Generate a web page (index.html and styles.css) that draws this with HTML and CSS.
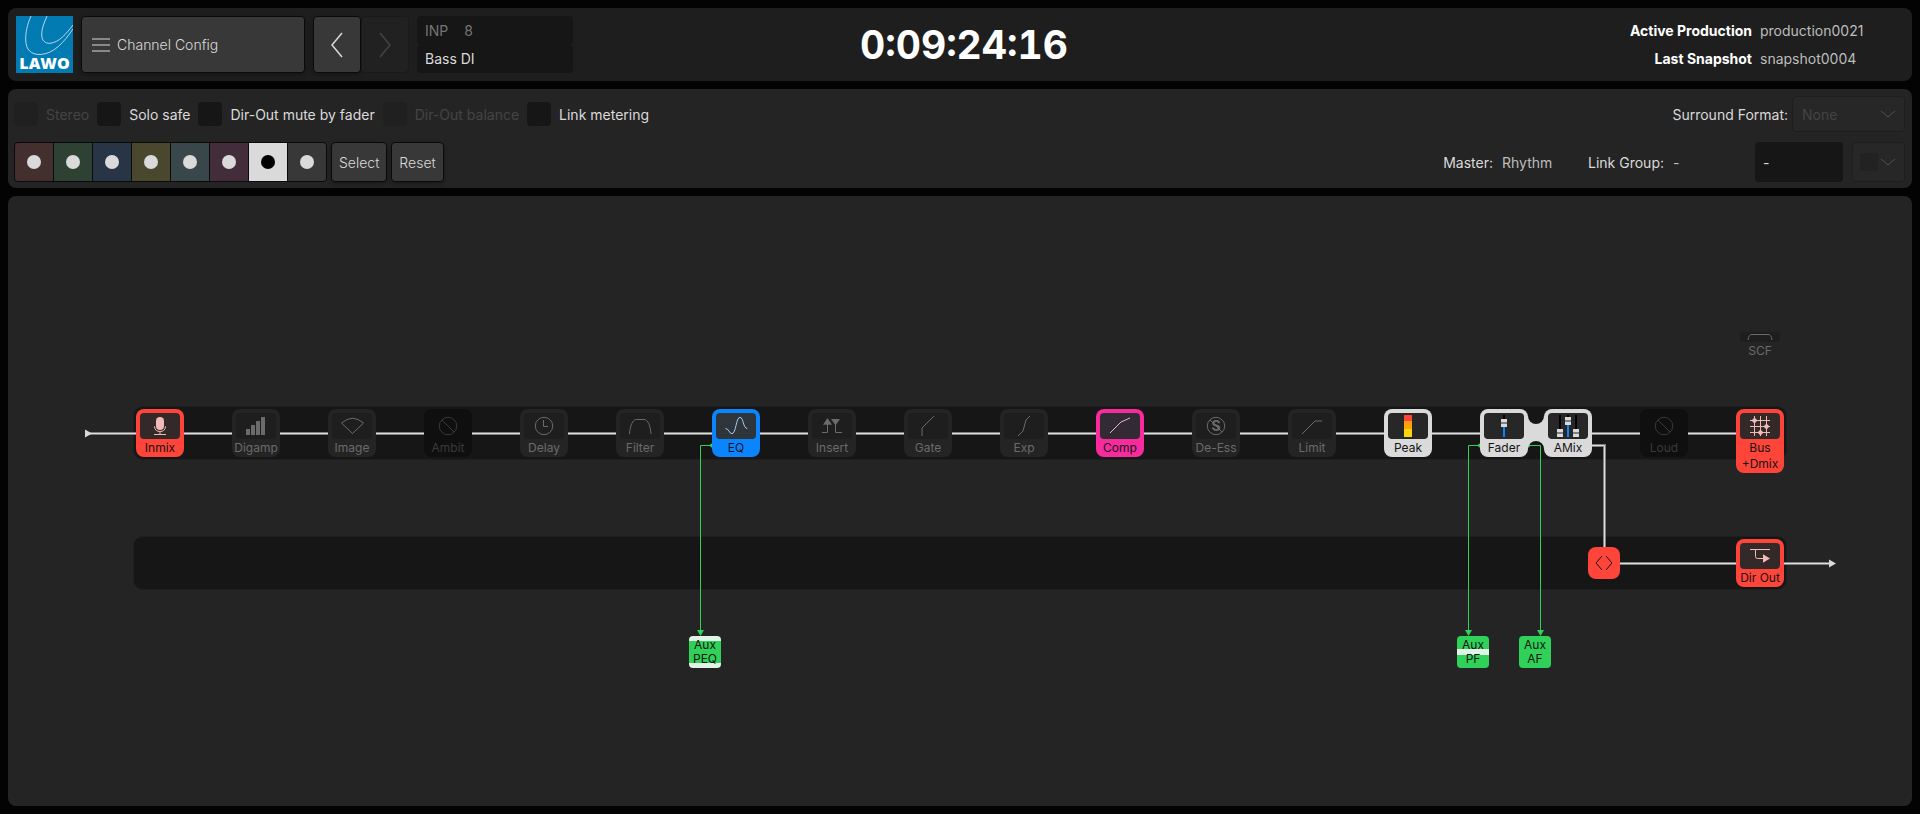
FILE: index.html
```
<!DOCTYPE html>
<html lang="en">
<head>
    <meta charset="UTF-8">
    <meta name="viewport" content="width=device-width, initial-scale=1.0">
    <title>Channel Config</title>
    <link rel="stylesheet" href="styles.css">
</head>
<body>
    <header class="panel header">
        <div class="header-left">
            <svg class="logo" viewBox="0 0 57 57" role="img" aria-label="Lawo">
                <rect width="57" height="57" fill="#027bb3"/>
                <g fill="none" stroke="#c5e2f0" stroke-width="0.9">
                    <path d="M15 0C11 9 9.5 17 9.7 24C10 34 15 38.5 24 38.5C38 38 48 26 57 13"/>
                    <path d="M31 0C28 7 25.5 13 25.7 19C26 25 29 27.5 34 27.3C43 26.5 50 18 57 9"/>
                </g>
                <text class="logo-text" x="28.5" y="53" text-anchor="middle">LAWO</text>
            </svg>
            <button class="btn menu-btn" type="button">
                <svg width="18" height="14" viewBox="0 0 18 14" stroke="currentColor"><path d="M0 1H18M0 7H18M0 13H18"/></svg>
                Channel Config
            </button>
            <div class="nav">
                <button class="btn nav-btn" type="button" aria-label="Previous channel">
                    <svg width="14" height="26" viewBox="0 0 14 26"><path d="M12 1L2 13L12 25"/></svg>
                </button>
                <button class="btn nav-btn" type="button" aria-label="Next channel" disabled>
                    <svg width="14" height="26" viewBox="0 0 14 26"><path d="M2 1L12 13L2 25"/></svg>
                </button>
            </div>
            <div class="channel">
                <div class="channel-id"><span>INP</span><span>8</span></div>
                <input class="channel-name" type="text" aria-label="Channel name" value="Bass DI">
            </div>
        </div>
        <div class="clock">0:09:24:16</div>
        <dl class="status">
            <dt>Active Production</dt>
            <dd>production0021</dd>
            <dt>Last Snapshot</dt>
            <dd>snapshot0004</dd>
        </dl>
    </header>

    <section class="panel toolbar">
        <div class="toolbar-row">
            <div class="checks">
                <label class="check"><input type="checkbox" disabled><span>Stereo</span></label>
                <label class="check"><input type="checkbox"><span>Solo safe</span></label>
                <label class="check"><input type="checkbox"><span>Dir-Out mute by fader</span></label>
                <label class="check"><input type="checkbox" disabled><span>Dir-Out balance</span></label>
                <label class="check"><input type="checkbox"><span>Link metering</span></label>
            </div>
            <div class="surround">
                <label for="surround-format">Surround Format:</label>
                <div class="dropdown">
                    <select id="surround-format" disabled><option>None</option></select>
                    <svg class="chevron" width="16" height="8" viewBox="0 0 16 8"><path d="M1 1L8 7L15 1"/></svg>
                </div>
            </div>
        </div>
        <div class="toolbar-row bottom">
            <div class="colours">
                <div class="swatches" role="radiogroup" aria-label="Channel colour">
                    <input class="red" type="radio" name="colour" aria-label="Red">
                    <input class="green" type="radio" name="colour" aria-label="Green">
                    <input class="blue" type="radio" name="colour" aria-label="Blue">
                    <input class="yellow" type="radio" name="colour" aria-label="Yellow">
                    <input class="cyan" type="radio" name="colour" aria-label="Cyan">
                    <input class="magenta" type="radio" name="colour" aria-label="Magenta">
                    <input class="white" type="radio" name="colour" aria-label="White" checked>
                    <input class="none" type="radio" name="colour" aria-label="None">
                </div>
                <button class="btn" type="button">Select</button>
                <button class="btn" type="button">Reset</button>
            </div>
            <div class="link">
                <span>Master:</span>
                <span class="link-value">Rhythm</span>
                <span>Link Group:</span>
                <span class="link-value">-</span>
                <input class="link-name" type="text" aria-label="Link group name" value="-">
                <div class="dropdown small">
                    <select aria-label="Link group colour" disabled><option></option></select>
                    <span class="dropdown-swatch"></span>
                    <svg class="chevron" width="16" height="8" viewBox="0 0 16 8"><path d="M1 1L8 7L15 1"/></svg>
                </div>
            </div>
        </div>
    </section>

    <main class="panel stage">
        <div class="canvas">
            <div class="track track-main"></div>
            <div class="track track-out"></div>

            <svg class="wires" viewBox="0 0 1750 352">
                <!-- signal path -->
                <g class="wire-outer">
                    <path d="M5 107.5H1655M1507 119.5H1519.5V223M1530 237.5H1745"/>
                </g>
                <g class="wire-inner">
                    <path d="M5 107.5H1655M1507 119.5H1519.5V223M1530 237.5H1745"/>
                </g>
                <g fill="#dadada">
                    <path d="M0 103.5L7 107.5L0 111.5ZM1744 233.5L1751 237.5L1744 241.5Z"/>
                </g>
                <!-- aux sends -->
                <g class="wire-aux">
                    <path d="M627 119.5H615.5V306M1395 119.5H1383.5V306M1443 119.5H1455.5V306"/>
                </g>
                <g fill="#30d158">
                    <path d="M612 304H619L615.5 310ZM1380 304H1387L1383.5 310ZM1452 304H1459L1455.5 310Z"/>
                    <circle cx="627" cy="119.5" r="2"/>
                    <circle cx="1395" cy="119.5" r="2"/>
                    <circle cx="1443" cy="119.5" r="2"/>
                </g>
            </svg>

            <button class="node scf" type="button">
                <svg class="icon" viewBox="0 0 40 10"><path d="M8 8C8.500 4.500 9.500 2.500 12 2.500H28C30.500 2.500 31.500 4.500 32 8"/></svg>
                <span>SCF</span>
            </button>

            <div class="chain">
                <button class="node red" type="button">
                    <svg class="icon" viewBox="0 0 40 26">
                        <rect class="fill" x="16" y="4" width="8" height="13" rx="4"/>
                        <path d="M14.500 13V13.500C14.500 17 17 18.500 20 18.500S25.500 17 25.500 13.500V13M20 18.500V21.500M14 21.500H26"/>
                    </svg>
                    <span>Inmix</span>
                </button>
                <button class="node" type="button">
                    <svg class="icon" viewBox="0 0 40 26"><path class="fill" d="M10 16h4v6h-4zM15 12h4v10h-4zM20 8h4v14h-4zM25 4h4v18h-4z"/></svg>
                    <span>Digamp</span>
                </button>
                <button class="node" type="button">
                    <svg class="icon" viewBox="0 0 40 26"><path d="M9.500 10Q20.500 0.500 31.500 10L20.500 20.500Z"/></svg>
                    <span>Image</span>
                </button>
                <button class="node empty" type="button">
                    <svg class="icon" viewBox="0 0 40 26"><circle cx="20" cy="13" r="8.700"/><path d="M14 7L26 19"/></svg>
                    <span>Ambit</span>
                </button>
                <button class="node" type="button">
                    <svg class="icon" viewBox="0 0 40 26"><circle cx="20" cy="13" r="8.700"/><path d="M19.500 7V13.500H24"/></svg>
                    <span>Delay</span>
                </button>
                <button class="node" type="button">
                    <svg class="icon" viewBox="0 0 40 26"><path d="M9.500 21C10 13 12.500 6.500 16.500 6.500H24C28 6.500 30.500 13 31 21"/></svg>
                    <span>Filter</span>
                </button>
                <button class="node blue" type="button">
                    <svg class="icon" viewBox="0 0 40 26"><path d="M9.500 15.500C13 15.500 13 20.700 16 20.700C20 20.700 20 4.300 24 4.300C27.500 4.300 27 15.500 31.300 15.500"/></svg>
                    <span>EQ</span>
                </button>
                <button class="node" type="button">
                    <svg class="icon" viewBox="0 0 40 26">
                        <path class="fill" d="M15.500 5L20 11.800H11ZM19 6H28L23.500 12.500Z"/>
                        <path d="M15.500 11V19.500H10M23.500 12V19.500H30"/>
                    </svg>
                    <span>Insert</span>
                </button>
                <button class="node" type="button">
                    <svg class="icon" viewBox="0 0 40 26"><path d="M14 23V15L26 3"/></svg>
                    <span>Gate</span>
                </button>
                <button class="node" type="button">
                    <svg class="icon" viewBox="0 0 40 26"><path d="M14 23L19 18L22 7L26 3"/></svg>
                    <span>Exp</span>
                </button>
                <button class="node pink" type="button">
                    <svg class="icon" viewBox="0 0 40 26"><path d="M10 20L21 9L30 5"/></svg>
                    <span>Comp</span>
                </button>
                <button class="node" type="button">
                    <svg class="icon" viewBox="0 0 40 26">
                        <circle cx="20" cy="13" r="8.700"/><path d="M14 7L26 19"/>
                        <text class="ess" x="20" y="18" text-anchor="middle">S</text>
                    </svg>
                    <span>De-Ess</span>
                </button>
                <button class="node" type="button">
                    <svg class="icon" viewBox="0 0 40 26"><path d="M10 21L23 8H30"/></svg>
                    <span>Limit</span>
                </button>
                <button class="node light" type="button">
                    <svg class="icon meter" viewBox="0 0 40 26">
                        <rect x="16" y="2" width="8" height="6" fill="#ff453a"/>
                        <rect x="16" y="8" width="8" height="8" fill="#ff9f0a"/>
                        <rect x="16" y="16" width="8" height="8" fill="#ffd60a"/>
                    </svg>
                    <span>Peak</span>
                </button>
                <div class="pair">
                    <button class="node light" type="button">
                        <svg class="icon" viewBox="0 0 40 26">
                            <path class="slot" d="M20 2V8"/>
                            <path class="level" d="M20 12V24"/>
                            <path class="knob" d="M17 10H23"/><path class="knob-line" d="M17 10H23"/>
                        </svg>
                        <span>Fader</span>
                    </button>
                    <svg class="bridge" width="16" height="48" viewBox="0 0 16 48"><path d="M-1 7H0A8 8 0 0 0 16 7H17V40H16A8 8 0 0 0 0 40H-1Z" fill="#dadada"/></svg>
                    <button class="node light" type="button">
                        <svg class="icon" viewBox="0 0 40 26">
                            <path class="slot" d="M12 2V18M20 2V6M28 2V18"/>
                            <path class="level" d="M20 10V24"/>
                            <path class="knob" d="M9 20H15M17 8H23M25 20H31"/><path class="knob-line" d="M9 20H15M17 8H23M25 20H31"/>
                        </svg>
                        <span>AMix</span>
                    </button>
                </div>
                <button class="node empty" type="button">
                    <svg class="icon" viewBox="0 0 40 26"><circle cx="20" cy="13" r="8.700"/><path d="M14 7L26 19"/></svg>
                    <span>Loud</span>
                </button>
                <button class="node red" type="button">
                    <svg class="icon" viewBox="0 0 40 26">
                        <path d="M14.500 3V23M20.500 3V23M26.500 3V23M10 7.500H30M10 13.500H30M10 19.500H30"/>
                        <path class="fill" d="M14.500 4.500l3 3l-3 3l-3-3zM26.500 10.500l3 3l-3 3l-3-3zM20.500 16.500l3 3l-3 3l-3-3z"/>
                    </svg>
                    <span>Bus<br>+Dmix</span>
                </button>
            </div>

            <button class="tap" type="button" aria-label="Direct out tap point">
                <svg width="32" height="32" viewBox="0 0 32 32"><path d="M14 9L8 16L14 23M18 9L24 16L18 23"/></svg>
            </button>
            <button class="node red dir-out" type="button">
                <svg class="icon" viewBox="0 0 40 26">
                    <path d="M10 6.500H30M15.500 6.500V13.500Q15.500 15.500 17.500 15.500H24"/>
                    <path class="fill" d="M23 11.300L30 15.500L23 19.700Z"/>
                </svg>
                <span>Dir Out</span>
            </button>

            <button class="aux aux-peq" type="button">Aux<br>PEQ</button>
            <button class="aux aux-pf" type="button">Aux<br>PF</button>
            <button class="aux aux-af" type="button">Aux<br>AF</button>
        </div>
    </main>
</body>
</html>
```

FILE: styles.css
```
:root {
    --page: #030303;
    --header: #1e1e1e;
    --panel: #242424;
    --well: #161616;
    --button: #383838;
    --light: #dadada;
    --text: #dadada;
    --muted: #6b6b6b;
    --disabled: #444444;
    --red: #ff453a;
    --blue: #0a84ff;
    --pink: #f72a9e;
    --green: #30d158;
}

*, *::before, *::after {
    box-sizing: border-box;
}

body {
    display: flex;
    flex-direction: column;
    gap: 8px;
    min-height: 100vh;
    margin: 0;
    padding: 8px;
    background: var(--page);
    color: var(--text);
    font-family: Inter, "Liberation Sans", sans-serif;
    font-size: 14px;
}

button, input, select {
    margin: 0;
    color: inherit;
    font: inherit;
}

svg {
    display: block;
}

.panel {
    border-radius: 8px;
    background: var(--panel);
}

.btn {
    padding: 0 7px;
    border: 1px solid #0a0a0a;
    border-radius: 4px;
    background: var(--button);
    box-shadow: 0 2px 4px rgba(0, 0, 0, 0.3);
    font-weight: 300;
}

.btn:disabled {
    border-color: #1a1a1a;
    background: #212121;
    color: var(--disabled);
    box-shadow: none;
}

/* Header */
.header {
    display: grid;
    grid-template-columns: 1fr auto 1fr;
    align-items: center;
    padding: 8px 0 8px 8px;
    background: var(--header);
}

.header-left {
    display: flex;
    gap: 8px;
}

.logo {
    width: 57px;
    height: 57px;
}

.logo-text {
    fill: #ffffff;
    font-family: "Open Sans", sans-serif;
    font-size: 16px;
    font-weight: 800;
}

.menu-btn {
    display: flex;
    align-items: center;
    gap: 7px;
    width: 224px;
    padding-left: 10px;
}

.nav {
    display: flex;
}

.nav-btn {
    display: grid;
    place-items: center;
    width: 48px;
    padding: 0;
}

.nav-btn path {
    fill: none;
    stroke: currentColor;
    stroke-width: 1.5;
}

.channel {
    display: grid;
    grid-template-rows: 1fr 1fr;
    width: 156px;
}

.channel-id, .channel-name {
    min-width: 0;
    width: 100%;
    padding: 0 8px;
    border: 0;
    border-radius: 4px;
    background: var(--well);
}

.channel-id {
    display: flex;
    align-items: center;
    gap: 16px;
    color: #757575;
}

.clock {
    color: #ffffff;
    font-size: 39px;
    font-weight: 700;
    line-height: 48px;
    font-variant-numeric: tabular-nums;
}

.status {
    display: grid;
    grid-template-columns: 1fr 152px;
    column-gap: 8px;
    margin: 0;
    line-height: 28px;
}

.status dt {
    color: #ffffff;
    font-weight: 700;
    text-align: right;
}

.status dd {
    margin: 0;
    color: #bdbdbd;
}

/* Channel options */
.toolbar {
    display: flex;
    flex-direction: column;
    gap: 10px;
    padding: 7px 7px 6px 6px;
}

.toolbar-row {
    display: flex;
    align-items: center;
    justify-content: space-between;
    height: 36px;
}

.toolbar-row.bottom {
    height: 40px;
}

.checks, .check, .surround, .link {
    display: flex;
    align-items: center;
    gap: 8px;
}

.check input {
    appearance: none;
    width: 24px;
    height: 24px;
    border-radius: 4px;
    background: var(--well);
}

.check input:disabled {
    background: #202020;
}

.check input:checked {
    background: var(--light);
}

.check input:disabled + span {
    color: var(--disabled);
}

.surround {
    gap: 4px;
}

.dropdown {
    position: relative;
}

.dropdown select {
    appearance: none;
    display: block;
    width: 113px;
    height: 36px;
    padding: 0 9px;
    border: 1px solid #1e1e1e;
    border-radius: 4px;
    background: #272727;
    color: var(--disabled);
    opacity: 1;
}

.dropdown.small select {
    width: 53px;
    height: 40px;
}

.chevron {
    position: absolute;
    top: 50%;
    right: 9px;
    transform: translateY(-50%);
    fill: none;
    stroke: #505050;
    pointer-events: none;
}

.dropdown-swatch {
    position: absolute;
    top: 11px;
    left: 8px;
    width: 18px;
    height: 18px;
    background: #222222;
}

.colours {
    display: flex;
    gap: 4px;
    height: 40px;
}

.swatches {
    display: flex;
    gap: 1px;
    overflow: hidden;
    border: 1px solid #0a0a0a;
    border-radius: 4px;
    background: #0a0a0a;
}

.swatches input {
    appearance: none;
    display: grid;
    place-items: center;
    width: 38px;
    background: var(--button);
}

.swatches input::before {
    content: "";
    width: 14px;
    height: 14px;
    border-radius: 50%;
    background: var(--light);
}

.swatches input:checked::before {
    background: #000000;
}

.swatches .red { background: #432f2e; }
.swatches .green { background: #2e4233; }
.swatches .blue { background: #283546; }
.swatches .yellow { background: #4a472f; }
.swatches .cyan { background: #39464a; }
.swatches .magenta { background: #432d3b; }
.swatches .white { background: var(--light); }

.link {
    gap: 9px;
}

.link-value {
    width: 77px;
    color: #bdbdbd;
}

.link-value + .link-name {
    margin-left: -4px;
}

.link-name {
    width: 88px;
    height: 40px;
    padding: 0 8px;
    border: 0;
    border-radius: 4px;
    background: var(--well);
}

/* Signal flow */
.stage {
    display: flex;
    flex: 1;
    align-items: center;
    justify-content: center;
    padding-top: 2px;
}

.canvas {
    position: relative;
    flex: none;
    width: 1750px;
    height: 352px;
}

.wires {
    position: absolute;
    inset: 0;
    width: 1750px;
    height: 352px;
    overflow: visible;
}

.wires path {
    stroke-linejoin: miter;
}

.wire-outer, .wire-inner, .wire-aux {
    fill: none;
}

.wire-outer {
    stroke: #808080;
    stroke-width: 3;
}

.wire-inner {
    stroke: #dedede;
    stroke-width: 1;
}

.wire-aux {
    stroke: var(--green);
}

.track {
    position: absolute;
    left: 48px;
    width: 1654px;
    height: 54px;
    border: 1px solid #1e1e1e;
    border-radius: 10px;
    background: var(--well);
}

.track-main { top: 80px; }
.track-out { top: 210px; }

.chain {
    position: absolute;
    top: 83px;
    left: 51px;
    display: flex;
    align-items: flex-start;
    gap: 48px;
}

.pair {
    display: flex;
}

.bridge {
    overflow: visible;
}

.node {
    display: flex;
    flex-direction: column;
    align-items: center;
    width: 48px;
    min-height: 48px;
    padding: 4px 0 1px;
    border: 0;
    border-radius: 8px;
    background: var(--panel);
    color: var(--muted);
    font-size: 12px;
    line-height: 16px;
    white-space: nowrap;
}

.node span {
    padding-top: 1px;
}

.icon {
    flex: none;
    width: 40px;
    height: 26px;
    border-radius: 4px;
    background: var(--header);
    fill: none;
    stroke: currentColor;
}

.icon .fill {
    fill: currentColor;
    stroke: none;
}

.icon.meter {
    stroke: none;
}

.node.empty {
    background: #0f0f0f;
    color: #3a3a3a;
}

.node.empty .icon {
    background: none;
}

.node.red { background: var(--red); }
.node.blue { background: var(--blue); }
.node.pink { background: var(--pink); }
.node.light { background: var(--light); }

.node.red span, .node.blue span, .node.pink span, .node.light span {
    color: #141414;
}

.node.red .icon { background: #332929; color: #f1bab7; }
.node.blue .icon { background: #2e353b; color: #a8cdf2; }
.node.pink .icon { background: #332b33; color: #f0b5d5; }
.node.light .icon { background: #272727; }

.icon .slot { stroke: #000000; stroke-width: 2; }
.icon .level { stroke: var(--blue); stroke-width: 2; }
.icon .knob { stroke: var(--light); stroke-width: 8; }
.icon .knob-line { stroke: #808080; stroke-width: 2; }

.ess {
    fill: currentColor;
    stroke: none;
    font-size: 14px;
    font-weight: 700;
}

.scf {
    position: absolute;
    top: 2px;
    left: 1651px;
    background: none;
}

.scf .icon {
    height: 10px;
}

.dir-out {
    position: absolute;
    top: 213px;
    left: 1651px;
}

.tap {
    position: absolute;
    top: 221px;
    left: 1503px;
    padding: 0;
    border: 0;
    border-radius: 8px;
    background: var(--red);
}

.tap path {
    fill: none;
    stroke: #141414;
}

.aux {
    position: absolute;
    top: 310px;
    width: 32px;
    height: 32px;
    padding: 0;
    border: 0;
    border-radius: 4px;
    background: var(--green);
    color: #141414;
    font-size: 12px;
    line-height: 14px;
}

.aux-peq {
    left: 604px;
    background: linear-gradient(#e0f4e5 5px, var(--green) 5px 27px, #e0f4e5 27px);
}

.aux-pf {
    left: 1372px;
    background: linear-gradient(var(--green) 13px, #e0f4e5 13px 19px, var(--green) 19px);
}

.aux-af {
    left: 1434px;
}
```
